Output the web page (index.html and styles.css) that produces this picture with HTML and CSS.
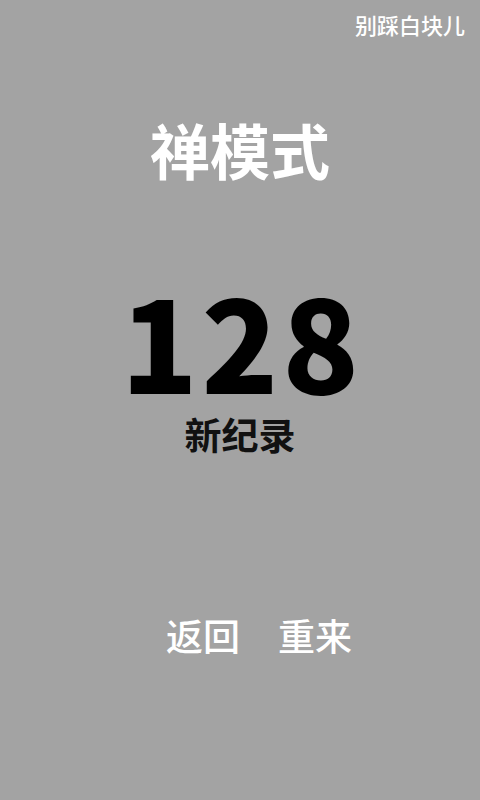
FILE: index.html
```html
<!DOCTYPE html>
<html lang="zh-CN">
<head>
<meta charset="utf-8">
<title>禅模式</title>
<link rel="stylesheet" href="styles.css">
</head>
<body>
<div class="screen">
  <div class="topbar"><span class="app-name">别踩白块儿</span></div>
  <h1 class="mode-title">禅模式</h1>
  <div class="score">128</div>
  <div class="record">新纪录</div>
  <div class="actions">
    <span class="action">返回</span>
    <span class="action">重来</span>
  </div>
</div>
</body>
</html>
```
FILE: styles.css
```css
html, body {
  margin: 0;
  padding: 0;
}
body {
  background: #a3a3a3;
  font-family: "Noto Sans CJK SC", "Noto Sans", sans-serif;
}
.screen {
  width: 480px;
  height: 800px;
  display: flex;
  flex-direction: column;
  align-items: center;
  overflow: hidden;
}
.topbar {
  align-self: stretch;
  display: flex;
  justify-content: flex-end;
  padding: 13px 15px 0 0;
}
.app-name {
  color: #ffffff;
  font-size: 22px;
  line-height: 22px;
  font-weight: 500;
}
.mode-title {
  margin: 84px 0 0 0;
  color: #ffffff;
  font-size: 60px;
  line-height: 60px;
  font-weight: 700;
}
.score {
  margin-top: 97px;
  padding-left: 4px;
  color: #000000;
  font-size: 126px;
  line-height: 126px;
  letter-spacing: 4px;
  font-weight: 900;
}
.record {
  margin-top: 14px;
  color: #111111;
  font-size: 37px;
  line-height: 37px;
  font-weight: 700;
}
.actions {
  margin-top: 164px;
  display: flex;
  gap: 38px;
  padding-left: 38px;
}
.action {
  color: #ffffff;
  font-size: 37px;
  line-height: 37px;
  font-weight: 500;
}
```
